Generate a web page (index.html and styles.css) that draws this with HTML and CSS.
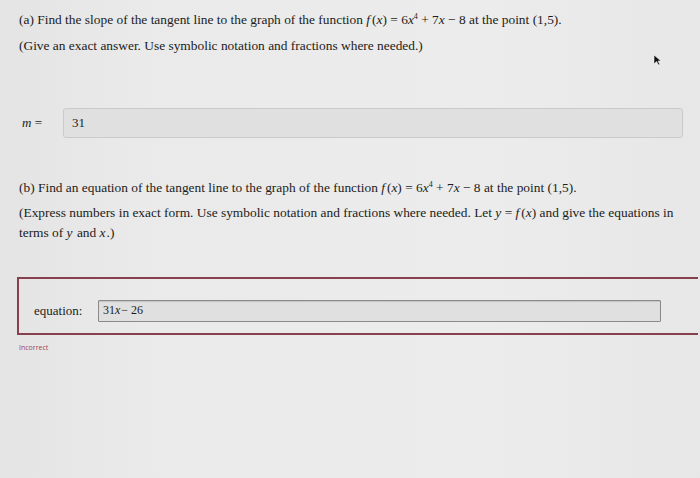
FILE: index.html
```html
<!DOCTYPE html>
<html>
<head>
<meta charset="utf-8">
<link rel="stylesheet" href="styles.css">
</head>
<body>
<div class="page">
  <section class="part part-a">
    <p class="line">(a) Find the slope of the tangent line to the graph of the function <i class="fn">f</i>(<i>x</i>) = 6<i>x</i><sup>4</sup> + 7<i>x</i> − 8 at the point (1,5).</p>
    <p class="line note">(Give an exact answer. Use symbolic notation and fractions where needed.)</p>
    <div class="answer-row">
      <span class="label"><i>m</i> =</span>
      <div class="field field-a">31</div>
    </div>
  </section>
  <section class="part part-b">
    <p class="line">(b) Find an equation of the tangent line to the graph of the function <i class="fn">f</i>(<i>x</i>) = 6<i>x</i><sup>4</sup> + 7<i>x</i> − 8 at the point (1,5).</p>
    <p class="line note wrap">(Express numbers in exact form. Use symbolic notation and fractions where needed. Let <i>y</i> = <i class="fn">f</i>(<i>x</i>) and give the equations in<br>terms of <i class="var">y</i> and <i class="var">x</i>.)</p>
    <div class="wrong-box">
      <span class="label eq-label">equation:</span>
      <div class="field field-b">31<i class="var">x</i> − 26</div>
    </div>
    <div class="status">Incorrect</div>
  </section>
  <svg class="cursor" width="9" height="12" viewBox="0 0 9 12"><path d="M1 1 L1 10 L3.5 7.5 L5.5 11 L6.8 10.3 L5 7 L8 7 Z" fill="#111" stroke="#f4f4f4" stroke-width="0.6"/></svg>
</div>
</body>
</html>
```
FILE: styles.css
```css
html, body {
  margin: 0;
  padding: 0;
  background: #e8e9e8;
}
body {
  font-family: "Liberation Serif", "Times New Roman", serif;
  color: #1c1c1c;
  font-size: 13.4px;
}
.page {
  position: relative;
  width: 700px;
  height: 478px;
  padding: 11px 0 0 19px;
  box-sizing: border-box;
  background: linear-gradient(90deg, #e3e4e3 0%, #e9eae9 20%, #ebeceb 70%, #e6e7e6 100%);
}
.line {
  margin: 0;
  line-height: 18px;
}
.line sup {
  font-size: 8px;
  line-height: 0;
  vertical-align: 5px;
}
.fn {
  margin-right: 2px;
}
.var {
  margin-right: 1px;
}
.note {
  margin-top: 8px;
}
.wrap {
  width: 670px;
  line-height: 20px;
  margin-top: 6px;
}
.answer-row {
  display: flex;
  align-items: center;
  margin-top: 53px;
}
.label {
  font-size: 13px;
}
.answer-row .label {
  width: 41px;
  padding-left: 3px;
}
.field {
  box-sizing: border-box;
  background: #dfe0df;
  display: flex;
  align-items: center;
}
.field-a {
  width: 620px;
  height: 30px;
  border: 1px solid #c9cac9;
  border-radius: 3px;
  padding-left: 8px;
  font-size: 13px;
}
.part-b {
  margin-top: 41px;
}
.wrong-box {
  margin: 34px 0 0 -2px;
  width: 681px;
  height: 58px;
  box-sizing: border-box;
  border: 2px solid #86404e;
  border-right: none;
  display: flex;
  align-items: center;
  padding: 9px 0 0 15px;
}
.eq-label {
  width: 64px;
  font-size: 13px;
}
.field-b {
  width: 563px;
  height: 22px;
  border: 1px solid #8a8a8a;
  border-radius: 1px;
  padding-left: 4px;
  font-size: 12px;
  box-shadow: inset 0 1px 1px rgba(0,0,0,0.12);
}
.status {
  margin-top: 8px;
  font-family: "Open Sans", "Liberation Sans", sans-serif;
  font-size: 7px;
  color: #a0465a;
}
.cursor {
  position: absolute;
  left: 653px;
  top: 54px;
}
```
